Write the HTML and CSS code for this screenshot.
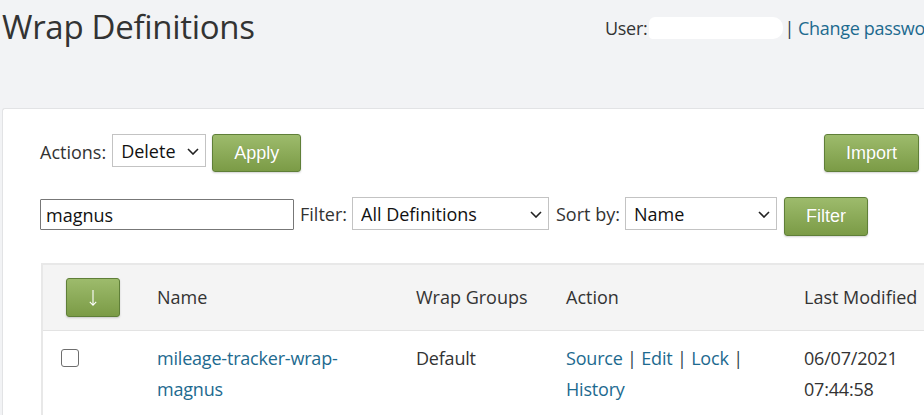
FILE: index.html
```html
<!DOCTYPE html>
<html lang="en">
<head>
<meta charset="utf-8">
<title>Wrap Definitions</title>
<link rel="stylesheet" href="styles.css">
</head>
<body>
<div class="page">
  <header class="top">
    <h1 class="title">Wrap Definitions</h1>
    <div class="user">
      <span class="user-label">User:</span>
      <span class="redacted"></span>
      <span class="sep">|</span>
      <a class="link" href="#">Change password</a>
    </div>
  </header>

  <main class="panel">
    <div class="row-actions">
      <div class="group">
        <label class="lbl">Actions:</label>
        <div class="select w-delete">
          <select><option>Delete</option></select>
          <svg class="chev" width="12" height="7" viewBox="0 0 12 7"><path d="M1 1l5 5 5-5" fill="none" stroke="#222" stroke-width="1.6"/></svg>
        </div>
        <button class="btn btn-apply">Apply</button>
      </div>
      <button class="btn btn-import">Import</button>
    </div>

    <div class="row-filter">
      <input class="search" type="text" value="magnus">
      <label class="lbl lbl-filter">Filter:</label>
      <div class="select w-defs">
        <select><option>All Definitions</option></select>
        <svg class="chev" width="12" height="7" viewBox="0 0 12 7"><path d="M1 1l5 5 5-5" fill="none" stroke="#222" stroke-width="1.6"/></svg>
      </div>
      <label class="lbl lbl-sort">Sort by:</label>
      <div class="select w-sort">
        <select><option>Name</option></select>
        <svg class="chev" width="12" height="7" viewBox="0 0 12 7"><path d="M1 1l5 5 5-5" fill="none" stroke="#222" stroke-width="1.6"/></svg>
      </div>
      <button class="btn btn-filter">Filter</button>
    </div>

    <table class="grid">
      <colgroup>
        <col class="c1"><col class="c2"><col class="c3"><col class="c4"><col class="c5">
      </colgroup>
      <thead>
        <tr>
          <th class="th-sort"><button class="btn btn-sort" aria-label="Sort"><svg width="10" height="18" viewBox="0 0 10 18"><path d="M5 1v15M1.8 12.8L5 16.3l3.2-3.5" fill="none" stroke="#fff" stroke-width="1.1"/></svg></button></th>
          <th>Name</th>
          <th>Wrap Groups</th>
          <th>Action</th>
          <th>Last Modified</th>
        </tr>
      </thead>
      <tbody>
        <tr>
          <td class="td-check"><span class="check"></span></td>
          <td><a class="link" href="#">mileage-tracker-wrap-<br>magnus</a></td>
          <td>Default</td>
          <td><a class="link" href="#">Source</a> <span class="sep">|</span> <a class="link" href="#">Edit</a> <span class="sep">|</span> <a class="link" href="#">Lock</a> <span class="sep">|</span><br><a class="link" href="#">History</a></td>
          <td>06/07/2021<br>07:44:58</td>
        </tr>
      </tbody>
    </table>
  </main>
</div>
</body>
</html>
```

FILE: styles.css
```css
* { box-sizing: border-box; }

html, body {
  margin: 0;
  padding: 0;
  background: #f2f3f5;
  overflow: hidden;
}

body {
  font-family: "Open Sans", "Noto Sans", sans-serif;
  font-size: 18px;
  color: #333;
}

.page {
  width: 1000px;
  padding-left: 2px;
}

.top {
  height: 108px;
  display: grid;
  grid-template-columns: 603px auto;
  align-items: start;
}

.title {
  margin: 0;
  padding-top: 4px;
  font-size: 33px;
  font-weight: 400;
  line-height: 46px;
  color: #333;
  letter-spacing: -0.3px;
}

.user {
  display: flex;
  align-items: center;
  padding-top: 14px;
  line-height: 28px;
  white-space: nowrap;
  letter-spacing: -0.3px;
}

.user-label { margin-right: 2px; }

.redacted {
  display: inline-block;
  width: 134px;
  height: 22px;
  background: #fff;
  border-radius: 6px 10px 10px 4px;
  margin-right: 1px;
}

.sep { color: #2f3f4f; }

.user .sep { margin-right: 4px; }

.link {
  color: #1d6a8f;
  text-decoration: none;
}

.panel {
  background: #fff;
  border-top: 1px solid #e2e3e5;
  border-left: 1px solid #e2e3e5;
  border-radius: 3px 0 0 0;
  padding: 25px 0 0 37px;
  height: 320px;
}

.row-actions {
  width: 879px;
  display: flex;
  justify-content: space-between;
  align-items: flex-start;
}

.group {
  display: flex;
  align-items: flex-start;
  gap: 6px;
}

.lbl {
  line-height: 33px;
  padding-top: 2px;
  white-space: nowrap;
}

.select {
  position: relative;
  height: 33px;
}

.select select {
  appearance: none;
  -webkit-appearance: none;
  width: 100%;
  height: 100%;
  border: 1px solid #c3c3c3;
  border-radius: 0;
  background: #fff;
  font-family: "Open Sans", "Noto Sans", sans-serif;
  font-size: 18px;
  color: #111;
  padding: 0 0 0 8px;
  margin: 0;
}

.chev {
  position: absolute;
  right: 7px;
  top: 14px;
  pointer-events: none;
}

.w-delete { width: 94px; }
.w-defs { width: 197px; }
.w-sort { width: 152px; }

.btn {
  font-family: "Liberation Sans", Arial, sans-serif;
  font-size: 18px;
  color: #fff;
  background: linear-gradient(#9dbb6c, #7b9b46);
  border: 1px solid #5f7f38;
  border-radius: 3px;
  box-shadow: 0 1px 2px rgba(0,0,0,0.18);
  text-shadow: 0 0 1px rgba(0,0,0,0.15);
  padding: 0;
  margin: 0;
  cursor: pointer;
}

.btn-apply { width: 89px; height: 38px; }
.btn-import { width: 95px; height: 38px; }

.row-filter {
  margin-top: 25px;
  display: flex;
  align-items: flex-start;
}

.search {
  width: 254px;
  height: 31px;
  margin-top: 2px;
  border: 1px solid #777;
  border-radius: 1px;
  font-family: "Open Sans", "Noto Sans", sans-serif;
  font-size: 18px;
  color: #111;
  padding: 0 0 0 5px;
}

.lbl-filter { margin: 0 5px 0 6px; padding-top: 1px; }
.lbl-sort { margin: 0 5px 0 7px; padding-top: 1px; }

.btn-filter { width: 84px; height: 39px; margin-left: 7px; }

.grid {
  margin-top: 27px;
  margin-left: 1px;
  border-collapse: collapse;
  table-layout: fixed;
  width: 960px;
  border-top: 2px solid #e8e8e8;
  border-left: 2px solid #e8e8e8;
}

.c1 { width: 99px; }
.c2 { width: 259px; }
.c3 { width: 150px; }
.c4 { width: 238px; }
.c5 { width: 214px; }

.grid th {
  background: #f4f4f4;
  font-weight: 400;
  text-align: left;
  height: 66px;
  padding: 0 0 0 16px;
  border-bottom: 1px solid #e3e3e3;
  white-space: nowrap;
  color: #333;
}

.grid th.th-sort {
  padding: 0 0 0 23px;
}

.btn-sort {
  width: 54px;
  height: 39px;
  display: flex;
  align-items: center;
  justify-content: center;
  padding-top: 2px;
}

.grid td {
  vertical-align: top;
  padding: 12px 0 20px 16px;
  line-height: 31px;
  white-space: nowrap;
  letter-spacing: -0.2px;
}

.grid td.td-check {
  padding: 18px 0 0 18px;
}

.check {
  display: block;
  width: 18px;
  height: 18px;
  border: 1.5px solid #6e6e6e;
  border-radius: 3px;
  background: #fff;
}
```
